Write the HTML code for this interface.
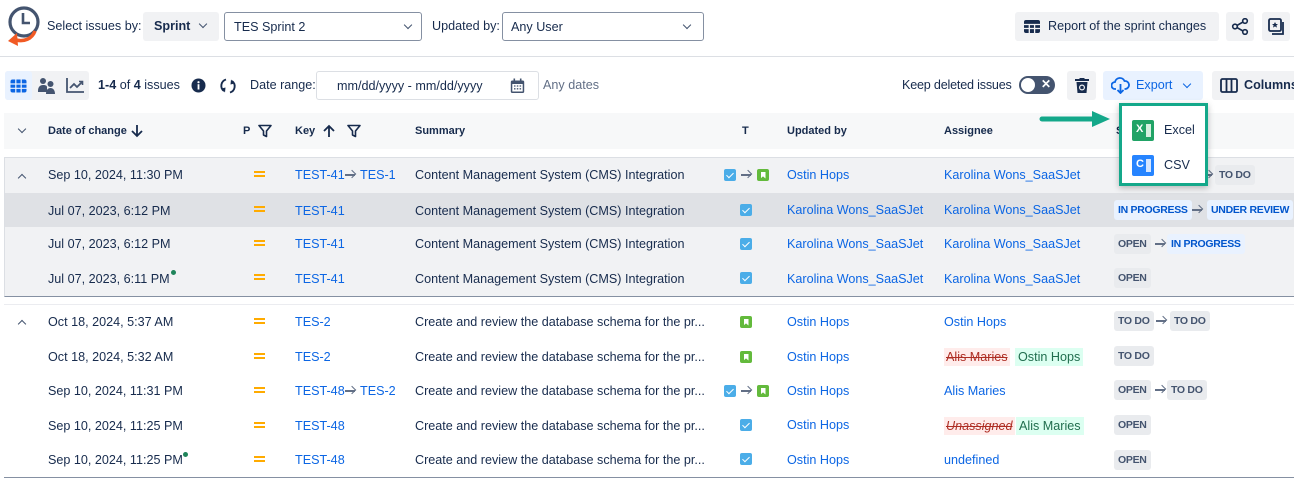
<!DOCTYPE html>
<html><head><meta charset="utf-8"><style>
*{box-sizing:border-box;margin:0;padding:0}
body{width:1294px;height:480px;overflow:hidden;background:#fff;font-family:"Liberation Sans",sans-serif;font-size:12.6px;color:#172b4d;position:relative}
.a{position:absolute;white-space:nowrap}
.btn{position:absolute;background:#f1f2f4;border-radius:3px}
.sel{position:absolute;border:1px solid #8590a2;border-radius:3px;background:#fff}
.chev{position:absolute;width:6px;height:6px;border-right:1.6px solid #44546f;border-bottom:1.6px solid #44546f;transform:rotate(45deg)}
.lnk{color:#0c66e4}
.lz{position:absolute;white-space:nowrap;font-size:10.5px;letter-spacing:-0.3px;font-weight:bold;padding:3px 4px;border-radius:3px;background:#e9ebee;color:#44546f;height:20px;line-height:14px}
.lb{background:#e9f2ff;color:#0055cc}
.pri{position:absolute;width:11px;height:6px;border-top:2px solid #ffab00;border-bottom:2px solid #ffab00}
.task{position:absolute;width:12px;height:12px;background:#4bade8;border-radius:2px}
.task:after{content:"";position:absolute;left:4px;top:2px;width:3px;height:6px;border-right:1.5px solid #fff;border-bottom:1.5px solid #fff;transform:rotate(45deg)}
.story{position:absolute;width:12px;height:12px;background:#63ba3c;border-radius:2px}
.story:after{content:"";position:absolute;left:3.5px;top:2.5px;width:5px;height:7px;background:#fff;clip-path:polygon(0 0,100% 0,100% 100%,50% 70%,0 100%)}
.arr{position:absolute;width:12px;height:10px}
.arr:before{content:"";position:absolute;left:0;top:4px;width:10px;height:1.8px;background:#626f86}
.arr:after{content:"";position:absolute;left:4px;top:1px;width:5px;height:5px;border-right:1.8px solid #626f86;border-top:1.8px solid #626f86;transform:rotate(45deg)}
.hd{font-size:11px;font-weight:bold}
</style></head><body>
<svg class="a" style="left:4px;top:4px" width="40" height="44" viewBox="0 0 40 44"><circle cx="20" cy="18" r="14" fill="none" stroke="#44546f" stroke-width="3.2"/><path d="M19 9v10h7" fill="none" stroke="#44546f" stroke-width="2.6"/><path d="M31 27c-3 8-11 11-19 9" fill="none" stroke="#f15a24" stroke-width="3.5"/><path d="M4 37l9-8 1 13z" fill="#f15a24"/></svg>
<div class="a" style="left:47px;top:19px">Select issues by:</div>
<div class="btn" style="left:143px;top:12px;width:76px;height:29px"><span class="a" style="left:11px;top:7px;font-weight:bold">Sprint</span><span class="chev" style="left:57px;top:9px"></span></div>
<div class="sel" style="left:224px;top:12px;width:198px;height:29px"><span class="a" style="left:9px;top:7px">TES Sprint 2</span><span class="chev" style="left:180px;top:9px"></span></div>
<div class="a" style="left:432px;top:19px">Updated by:</div>
<div class="sel" style="left:502px;top:12px;width:202px;height:29px"><span class="a" style="left:8px;top:7px">Any User</span><span class="chev" style="left:181px;top:9px"></span></div>
<div class="btn" style="left:1015px;top:12px;width:204px;height:29px"><svg class="a" style="left:8px;top:7px" width="18" height="15"><rect x="1" y="1" width="16" height="13" rx="2" fill="#172b4d"/><path d="M1 5.5h16M1 9.5h16M6.3 5v9M11.6 5v9" stroke="#f1f2f4" stroke-width="1.3"/></svg><span class="a" style="left:33px;top:7px">Report of the sprint changes</span></div>
<div class="btn" style="left:1226px;top:12px;width:28px;height:29px"><svg class="a" style="left:5px;top:6px" width="18" height="17"><circle cx="4" cy="8.5" r="2.3" fill="none" stroke="#172b4d" stroke-width="1.6"/><circle cx="14" cy="3" r="2.3" fill="none" stroke="#172b4d" stroke-width="1.6"/><circle cx="14" cy="14" r="2.3" fill="none" stroke="#172b4d" stroke-width="1.6"/><path d="M6 7.4l6-3.4M6 9.6l6 3.4" stroke="#172b4d" stroke-width="1.6"/></svg></div>
<div class="btn" style="left:1262px;top:12px;width:28px;height:29px"><svg class="a" style="left:6px;top:6px" width="17" height="17"><rect x="1" y="1" width="12" height="12" rx="1.5" fill="none" stroke="#172b4d" stroke-width="1.8"/><path d="M4 16h11V4" fill="none" stroke="#172b4d" stroke-width="1.8"/><path d="M7 4l1 2h2l-1.6 1.4.6 2.2L7 8.4 5 9.6l.6-2.2L4 6h2z" fill="#172b4d"/></svg></div>
<div class="a" style="left:0;top:56px;width:1294px;height:1px;background:#dcdfe4"></div>

<div class="btn" style="left:5px;top:71px;width:84px;height:29px"></div>
<div class="a" style="left:5px;top:71px;width:27px;height:29px;background:#e9f2ff;border-radius:3px"></div>
<svg class="a" style="left:10px;top:79px" width="17" height="14"><rect x="0.5" y="0.5" width="16" height="13" rx="2" fill="#0c66e4"/><path d="M0 5h17M0 9.3h17M5.8 0v14M11.2 0v14" stroke="#e9f2ff" stroke-width="1.2"/></svg>
<svg class="a" style="left:38px;top:77px" width="18" height="17"><circle cx="5" cy="4" r="3" fill="#44546f"/><circle cx="12.5" cy="7" r="3" fill="#44546f"/><path d="M0 14c0-4 2-6 5-6s4 1 4 2v5H0zM8 17c0-4 2-6 4.5-6S17 13 17 17z" fill="#44546f"/></svg>
<svg class="a" style="left:66px;top:78px" width="18" height="15"><path d="M1 0v14h17" fill="none" stroke="#44546f" stroke-width="1.8"/><path d="M4 10l4-4 3 3 5-5" fill="none" stroke="#44546f" stroke-width="1.8"/><path d="M13 3.5h3.5V7" fill="none" stroke="#44546f" stroke-width="1.6"/></svg>
<div class="a" style="left:98px;top:78px"><b>1-4</b> of <b>4</b> issues</div>
<svg class="a" style="left:191px;top:78px" width="15" height="15"><circle cx="7.5" cy="7.5" r="7" fill="#172b4d"/><rect x="6.6" y="6.2" width="1.8" height="5.3" fill="#fff"/><circle cx="7.5" cy="4.2" r="1.1" fill="#fff"/></svg>
<svg class="a" style="left:219px;top:77px" width="18" height="18"><path d="M7 2.5A6.5 6.5 0 0 0 5 14" fill="none" stroke="#172b4d" stroke-width="1.9"/><path d="M11 15.5A6.5 6.5 0 0 0 13 4" fill="none" stroke="#172b4d" stroke-width="1.9"/><path d="M2.5 11.5l3.5 4 .5-5zM15.5 6.5l-3.5-4-.5 5z" fill="#172b4d"/></svg>
<div class="a" style="left:250px;top:78px">Date range:</div>
<div class="a" style="left:316px;top:71px;width:223px;height:29px;border:1px solid #dcdfe4;border-radius:3px"><span class="a" style="left:20px;top:7px">mm/dd/yyyy - mm/dd/yyyy</span><svg class="a" style="left:193px;top:6px" width="15" height="16"><rect x="0.8" y="2.5" width="13.4" height="12.5" rx="1.5" fill="#44546f"/><rect x="2.3" y="6" width="10.4" height="7.5" fill="#fff"/><path d="M4 8h1.5M6.8 8h1.5M9.6 8h1.5M4 10.8h1.5M6.8 10.8h1.5M9.6 10.8h1.5" stroke="#44546f" stroke-width="1.3"/><rect x="3.5" y="0.5" width="1.6" height="3" fill="#44546f"/><rect x="9.9" y="0.5" width="1.6" height="3" fill="#44546f"/></svg></div>
<div class="a" style="left:543px;top:78px;color:#626f86">Any dates</div>
<div class="a" style="left:902px;top:78px;letter-spacing:-0.2px">Keep deleted issues</div>
<div class="a" style="left:1019px;top:76px;width:36px;height:18px;border-radius:9px;background:#44546f"><span class="a" style="left:2px;top:2px;width:14px;height:14px;border-radius:7px;background:#fff"></span><span class="a" style="left:22px;top:1px;color:#fff;font-size:12px;font-weight:bold">✕</span></div>
<div class="btn" style="left:1067px;top:71px;width:29px;height:29px"><svg class="a" style="left:8px;top:7px" width="14" height="15"><rect x="0" y="1" width="14" height="2" fill="#172b4d"/><rect x="4.5" y="0" width="5" height="2" fill="#172b4d"/><path d="M1.5 4h11l-1 11h-9z" fill="#172b4d"/><circle cx="7" cy="9.5" r="2.4" fill="none" stroke="#f1f2f4" stroke-width="1.2"/></svg></div>
<div class="a" style="left:1103px;top:71px;width:100px;height:29px;background:#e9f2ff;border-radius:3px"><svg class="a" style="left:8px;top:6px" width="19" height="17"><path d="M5 12H4a3.5 3.5 0 0 1 0-7 5 5 0 0 1 9.5-1 4 4 0 0 1 1 8h-1" fill="none" stroke="#0c66e4" stroke-width="1.8"/><path d="M9.5 7v9M6.5 13l3 3 3-3" fill="none" stroke="#0c66e4" stroke-width="1.8"/></svg><span class="a" style="left:33px;top:7px;color:#0c66e4">Export</span><span class="chev" style="left:81px;top:10px;border-color:#0c66e4"></span></div>
<div class="btn" style="left:1212px;top:71px;width:90px;height:29px"><svg class="a" style="left:8px;top:7px" width="18" height="15"><rect x="1" y="1" width="16" height="13" rx="1.5" fill="none" stroke="#172b4d" stroke-width="1.8"/><path d="M6.5 1v13M11.5 1v13" stroke="#172b4d" stroke-width="1.8"/></svg><span class="a" style="left:32px;top:7px;font-weight:bold">Columns</span></div>

<div class="a" style="left:4px;top:113px;width:1290px;height:36px;background:#f7f8f9"></div>
<span class="chev" style="left:19px;top:126px"></span>
<div class="a hd" style="left:48px;top:125px">Date of change</div>
<svg class="a" style="left:130px;top:124px" width="14" height="14"><path d="M7 1v11M2 7l5 5 5-5" fill="none" stroke="#172b4d" stroke-width="1.8"/></svg>
<div class="a hd" style="left:243px;top:125px">P</div>
<svg class="a" style="left:258px;top:124px" width="14" height="14"><path d="M1 1.5h12L8.5 7v5.5l-3-1.5V7z" fill="none" stroke="#172b4d" stroke-width="1.6" stroke-linejoin="round"/></svg>
<div class="a hd" style="left:295px;top:125px">Key</div>
<svg class="a" style="left:322px;top:124px" width="14" height="14"><path d="M7 13V2M2 7l5-5 5 5" fill="none" stroke="#172b4d" stroke-width="1.8"/></svg>
<svg class="a" style="left:347px;top:124px" width="14" height="14"><path d="M1 1.5h12L8.5 7v5.5l-3-1.5V7z" fill="none" stroke="#172b4d" stroke-width="1.6" stroke-linejoin="round"/></svg>
<div class="a hd" style="left:415px;top:125px">Summary</div>
<div class="a hd" style="left:742px;top:125px">T</div>
<div class="a hd" style="left:787px;top:125px">Updated by</div>
<div class="a hd" style="left:944px;top:125px">Assignee</div>
<div class="a hd" style="left:1116px;top:125px">S</div>

<div class="a" style="left:4px;top:157px;width:1290px;height:140px;background:#f1f2f4;border-top:1px solid #dcdfe4;border-bottom:1.5px solid #8590a2;border-left:1px solid #dcdfe4"></div>
<div class="a" style="left:5px;top:193px;width:1289px;height:34px;background:#dfe1e5"></div>
<span class="chev" style="left:19px;top:175px;transform:rotate(-135deg)"></span>
<div class="a" style="left:48px;top:168px">Sep 10, 2024, 11:30 PM</div>
<div class="pri" style="left:254px;top:171px"></div>
<div class="a lnk" style="left:295px;top:168px">TEST-41</div><div class="arr" style="left:345px;top:170px"></div><div class="a lnk" style="left:360px;top:168px">TES-1</div>
<div class="a" style="left:415px;top:168px">Content Management System (CMS) Integration</div>
<div class="task" style="left:724px;top:169px"></div><div class="arr" style="left:741px;top:170px"></div><div class="story" style="left:757px;top:169px"></div>
<div class="a lnk" style="left:787px;top:168px">Ostin Hops</div>
<div class="a lnk" style="left:944px;top:168px">Karolina Wons_SaaSJet</div>
<div class="arr" style="left:1202px;top:170px"></div>
<div class="lz" style="left:1215px;top:165px">TO DO</div>

<div class="a" style="left:48px;top:204px">Jul 07, 2023, 6:12 PM</div>
<div class="pri" style="left:254px;top:206px"></div>
<div class="a lnk" style="left:295px;top:204px">TEST-41</div>
<div class="a" style="left:415px;top:204px">Content Management System (CMS) Integration</div>
<div class="task" style="left:740px;top:204px"></div>
<div class="a lnk" style="left:787px;top:203px">Karolina Wons_SaaSJet</div>
<div class="a lnk" style="left:944px;top:203px">Karolina Wons_SaaSJet</div>
<div class="lz lb" style="left:1114px;top:200px">IN PROGRESS</div><div class="arr" style="left:1192px;top:205px"></div><div class="lz lb" style="left:1207px;top:200px">UNDER REVIEW</div>

<div class="a" style="left:48px;top:237px">Jul 07, 2023, 6:12 PM</div>
<div class="pri" style="left:254px;top:240px"></div>
<div class="a lnk" style="left:295px;top:237px">TEST-41</div>
<div class="a" style="left:415px;top:237px">Content Management System (CMS) Integration</div>
<div class="task" style="left:740px;top:238px"></div>
<div class="a lnk" style="left:787px;top:237px">Karolina Wons_SaaSJet</div>
<div class="a lnk" style="left:944px;top:237px">Karolina Wons_SaaSJet</div>
<div class="lz" style="left:1114px;top:234px">OPEN</div><div class="arr" style="left:1155px;top:239px"></div><div class="lz lb" style="left:1167px;top:234px">IN PROGRESS</div>

<div class="a" style="left:48px;top:272px">Jul 07, 2023, 6:11 PM</div><div class="a" style="left:171px;top:270px;width:5px;height:5px;border-radius:3px;background:#1f845a"></div>
<div class="pri" style="left:254px;top:274px"></div>
<div class="a lnk" style="left:295px;top:272px">TEST-41</div>
<div class="a" style="left:415px;top:272px">Content Management System (CMS) Integration</div>
<div class="task" style="left:740px;top:272px"></div>
<div class="a lnk" style="left:787px;top:272px">Karolina Wons_SaaSJet</div>
<div class="a lnk" style="left:944px;top:272px">Karolina Wons_SaaSJet</div>
<div class="lz" style="left:1114px;top:268px">OPEN</div>

<div class="a" style="left:4px;top:304px;width:1290px;height:174px;border-top:1px solid #ebecf0;border-bottom:1.5px solid #8590a2"></div>
<span class="chev" style="left:19px;top:321px;transform:rotate(-135deg)"></span>
<div class="a" style="left:48px;top:315px">Oct 18, 2024, 5:37 AM</div>
<div class="pri" style="left:254px;top:318px"></div>
<div class="a lnk" style="left:295px;top:315px">TES-2</div>
<div class="a" style="left:415px;top:315px">Create and review the database schema for the pr...</div>
<div class="story" style="left:740px;top:316px"></div>
<div class="a lnk" style="left:787px;top:315px">Ostin Hops</div>
<div class="a lnk" style="left:944px;top:315px">Ostin Hops</div>
<div class="lz" style="left:1114px;top:311px">TO DO</div><div class="arr" style="left:1156px;top:316px"></div><div class="lz" style="left:1170px;top:311px">TO DO</div>

<div class="a" style="left:48px;top:350px">Oct 18, 2024, 5:32 AM</div>
<div class="pri" style="left:254px;top:353px"></div>
<div class="a lnk" style="left:295px;top:350px">TES-2</div>
<div class="a" style="left:415px;top:350px">Create and review the database schema for the pr...</div>
<div class="story" style="left:740px;top:351px"></div>
<div class="a lnk" style="left:787px;top:350px">Ostin Hops</div>
<div class="a" style="left:944px;top:348px;padding:2px 2px;background:#ffeceb;color:#ae2e24;text-decoration:line-through">Alis Maries</div>
<div class="a" style="left:1015px;top:348px;padding:2px 3px;background:#dcfff1;color:#216e4e">Ostin Hops</div>
<div class="lz" style="left:1114px;top:346px">TO DO</div>

<div class="a" style="left:48px;top:384px">Sep 10, 2024, 11:31 PM</div>
<div class="pri" style="left:254px;top:387px"></div>
<div class="a lnk" style="left:295px;top:384px">TEST-48</div><div class="arr" style="left:345px;top:386px"></div><div class="a lnk" style="left:360px;top:384px">TES-2</div>
<div class="a" style="left:415px;top:384px">Create and review the database schema for the pr...</div>
<div class="task" style="left:724px;top:385px"></div><div class="arr" style="left:741px;top:386px"></div><div class="story" style="left:757px;top:385px"></div>
<div class="a lnk" style="left:787px;top:384px">Ostin Hops</div>
<div class="a lnk" style="left:944px;top:384px">Alis Maries</div>
<div class="lz" style="left:1114px;top:380px">OPEN</div><div class="arr" style="left:1155px;top:385px"></div><div class="lz" style="left:1167px;top:380px">TO DO</div>

<div class="a" style="left:48px;top:419px">Sep 10, 2024, 11:25 PM</div>
<div class="pri" style="left:254px;top:422px"></div>
<div class="a lnk" style="left:295px;top:419px">TEST-48</div>
<div class="a" style="left:415px;top:419px">Create and review the database schema for the pr...</div>
<div class="task" style="left:740px;top:419px"></div>
<div class="a lnk" style="left:787px;top:418px">Ostin Hops</div>
<div class="a" style="left:944px;top:417px;padding:2px 2px;background:#ffeceb;color:#ae2e24;text-decoration:line-through;font-style:italic">Unassigned</div>
<div class="a" style="left:1016px;top:417px;padding:2px 3px;background:#dcfff1;color:#216e4e">Alis Maries</div>
<div class="lz" style="left:1114px;top:415px">OPEN</div>

<div class="a" style="left:48px;top:453px">Sep 10, 2024, 11:25 PM</div><div class="a" style="left:183px;top:452px;width:5px;height:5px;border-radius:3px;background:#1f845a"></div>
<div class="pri" style="left:254px;top:456px"></div>
<div class="a lnk" style="left:295px;top:453px">TEST-48</div>
<div class="a" style="left:415px;top:453px">Create and review the database schema for the pr...</div>
<div class="task" style="left:740px;top:453px"></div>
<div class="a lnk" style="left:787px;top:453px">Ostin Hops</div>
<div class="a lnk" style="left:944px;top:453px">undefined</div>
<div class="lz" style="left:1114px;top:450px">OPEN</div>

<div class="a" style="left:1119px;top:103px;width:89px;height:83px;background:#fff;border:3px solid #14a88a;box-shadow:0 2px 6px rgba(0,0,0,.25)"><div class="a" style="left:10px;top:14px;width:22px;height:21px;background:#21a366;border-radius:2px"><span class="a" style="left:4px;top:3px;color:#fff;font-size:11px;font-weight:bold">X</span><span class="a" style="left:14px;top:4px;width:5px;height:13px;background:#d6f0e0"></span></div><span class="a" style="left:42px;top:17px">Excel</span><div class="a" style="left:10px;top:49px;width:22px;height:21px;background:#2684ff;border-radius:2px"><span class="a" style="left:4px;top:3px;color:#fff;font-size:11px;font-weight:bold">C</span><span class="a" style="left:14px;top:4px;width:5px;height:13px;background:#d6e6ff"></span></div><span class="a" style="left:42px;top:52px">CSV</span></div>
<svg class="a" style="left:1038px;top:110px" width="76" height="18"><path d="M4 9h52" stroke="#14a88a" stroke-width="5" stroke-linecap="round"/><path d="M54 1l18 8-18 8z" fill="#14a88a"/></svg>
</body></html>
